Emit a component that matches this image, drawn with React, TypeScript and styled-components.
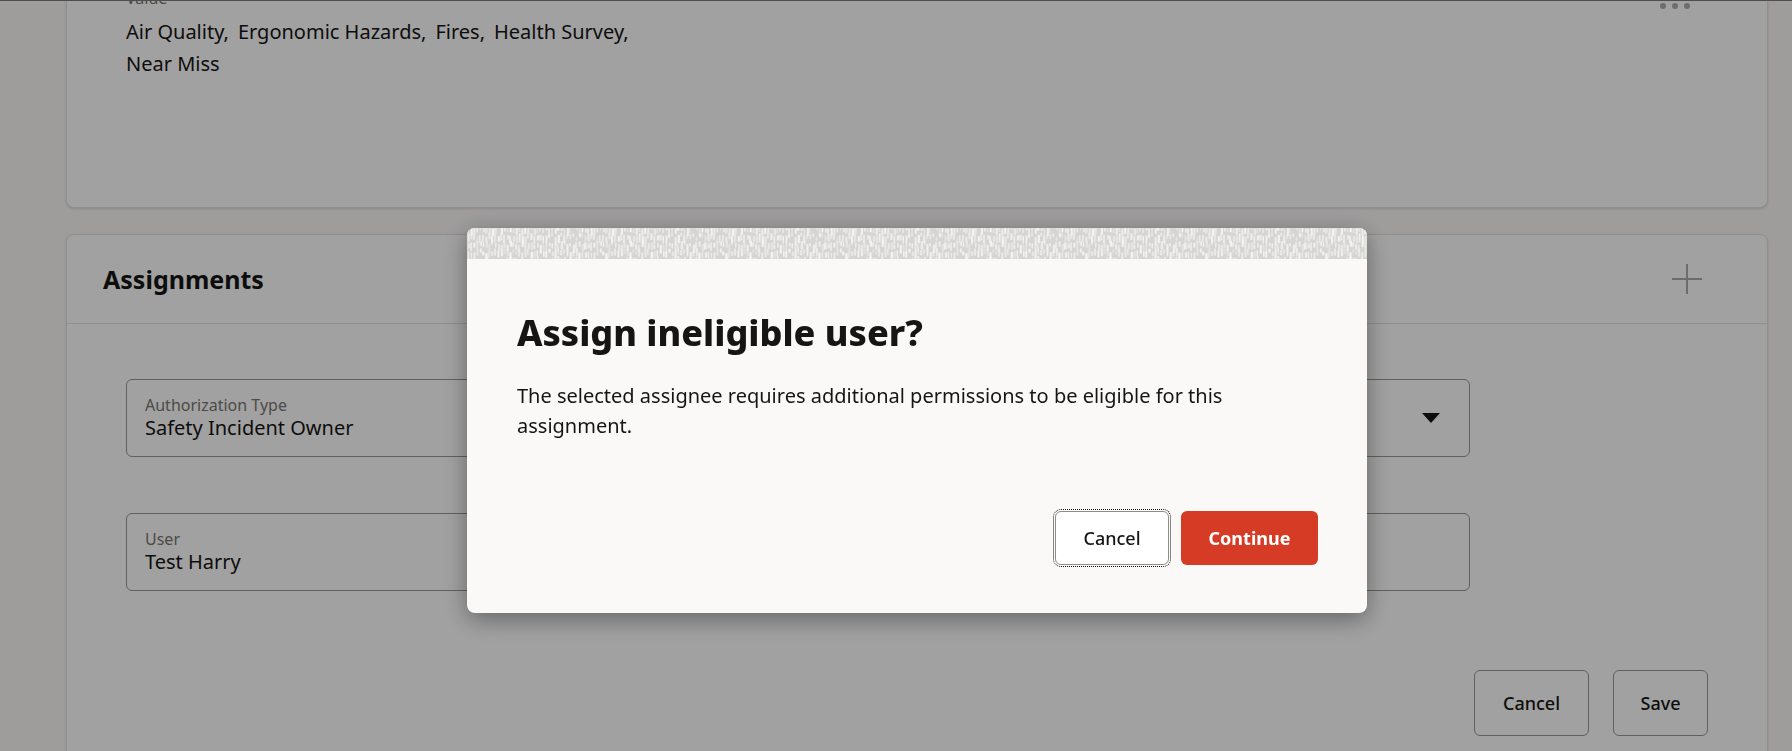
import { FC } from 'react';
import styled, { createGlobalStyle } from 'styled-components';

const GlobalStyle = createGlobalStyle`
    html, body {
        margin: 0;
        height: 100%;
        overflow: hidden;
        background: #fbf9f8;
    }
    body {
        font-family: "Noto Sans", "Open Sans", Arial, sans-serif;
        color: #161513;
    }
`;

// speckle strip on top of the dialog, seeded so it draws the same every time
const buildDashes = () => {
    const dashes: { x: number; y: number; w: number; h: number; o: number }[] = [];
    let seed = 7;
    const next = () => {
        seed = (seed * 16807) % 2147483647;
        return seed / 2147483647;
    };
    for (let x = 0; x < 120; x += 3) {
        for (let y = -4; y < 31; y += 8) {
            dashes.push({
                x: x + next(),
                y: y + next() * 5,
                w: 1.4 + next(),
                h: 4 + next() * 5,
                o: 0.45 + next() * 0.55,
            });
        }
    }
    return dashes;
};

const dashes = buildDashes();

const App: FC = () => {
    return (
        <>
            <GlobalStyle />
            <Page>
                <Card $cut>
                    <ValueBody>
                        <div>
                            <ValueLabel>Value</ValueLabel>
                            <ValueList>
                                <span>Air Quality,</span>
                                <span>Ergonomic Hazards,</span>
                                <span>Fires,</span>
                                <span>Health Survey,</span>
                                <span>Near Miss</span>
                            </ValueList>
                        </div>
                        <Dots width="30" height="6" viewBox="0 0 30 6">
                            <circle cx="3" cy="3" r="3" />
                            <circle cx="15" cy="3" r="3" />
                            <circle cx="27" cy="3" r="3" />
                        </Dots>
                    </ValueBody>
                </Card>
                <Card>
                    <CardHeader>
                        <CardTitle>Assignments</CardTitle>
                        <AddIcon width="30" height="30" viewBox="0 0 30 30">
                            <path d="M15 0v30M0 15h30" />
                        </AddIcon>
                    </CardHeader>
                    <Form>
                        <Field>
                            <div>
                                <FieldLabel>Authorization Type</FieldLabel>
                                <FieldValue>Safety Incident Owner</FieldValue>
                            </div>
                            <Caret width="18" height="10" viewBox="0 0 18 10">
                                <path d="M0 0h18L9 10z" />
                            </Caret>
                        </Field>
                        <Field>
                            <div>
                                <FieldLabel>User</FieldLabel>
                                <FieldValue>Test Harry</FieldValue>
                            </div>
                        </Field>
                    </Form>
                    <CardActions>
                        <PageButton $wide>Cancel</PageButton>
                        <PageButton>Save</PageButton>
                    </CardActions>
                </Card>
            </Page>
            <Scrim>
                <Dialog>
                    <Speckle width="100%" height="31">
                        <defs>
                            <pattern
                                id="speckle"
                                width="120"
                                height="31"
                                patternUnits="userSpaceOnUse"
                            >
                                {dashes.map((d, i) => (
                                    <rect
                                        key={i}
                                        x={d.x}
                                        y={d.y}
                                        width={d.w}
                                        height={d.h}
                                        rx="0.7"
                                        fill="#f4f3f1"
                                        opacity={d.o}
                                    />
                                ))}
                            </pattern>
                        </defs>
                        <rect width="100%" height="31" fill="url(#speckle)" />
                    </Speckle>
                    <DialogBody>
                        <DialogTitle>Assign ineligible user?</DialogTitle>
                        <DialogText>
                            The selected assignee requires additional permissions to be
                            eligible for this assignment.
                        </DialogText>
                    </DialogBody>
                    <DialogFooter>
                        <OutlineButton>Cancel</OutlineButton>
                        <PrimaryButton>Continue</PrimaryButton>
                    </DialogFooter>
                </Dialog>
            </Scrim>
        </>
    );
};

export default App;

const Page = styled.div`
    height: 751px;
    box-sizing: border-box;
    overflow: hidden;
    padding: 0 24px 0 66px;
    display: flex;
    flex-direction: column;
    gap: 26px;
`;
const Card = styled.section<{ $cut?: boolean }>`
    flex: none;
    background: #fff;
    border-radius: 8px;
    border: 1px solid #e4e2df;
    box-shadow: 0 1px 3px rgba(0, 0, 0, 0.12);
    ${({ $cut }) =>
        $cut &&
        `
        height: 208px;
        box-sizing: border-box;
        border-top: 0;
        border-radius: 0 0 8px 8px;
    `}
`;
const ValueBody = styled.div`
    display: flex;
    justify-content: space-between;
    align-items: flex-start;
    padding: 0 77px 0 59px;
    width: 700px;
    box-sizing: content-box;
    min-width: calc(100% - 136px);
`;
const ValueLabel = styled.div`
    font-size: 16px;
    line-height: 22px;
    margin-top: -13px;
    color: #7a7672;
`;
const ValueList = styled.div`
    display: flex;
    flex-wrap: wrap;
    column-gap: 9px;
    width: 590px;
    font-size: 20px;
    line-height: 32px;
    margin-top: 7px;
`;
const Dots = styled.svg`
    flex: none;
    margin-top: 3px;
    fill: #b0aeab;
`;
const CardHeader = styled.div`
    display: flex;
    align-items: center;
    justify-content: space-between;
    height: 89px;
    box-sizing: border-box;
    padding: 0 65px 0 36px;
    border-bottom: 1px solid #e4e2df;
`;
const CardTitle = styled.h2`
    margin: 0;
    font-size: 25px;
    font-weight: 700;
`;
const AddIcon = styled.svg`
    fill: none;
    stroke: #adaba9;
    stroke-width: 2;
`;
const Form = styled.div`
    display: flex;
    flex-direction: column;
    gap: 56px;
    padding: 55px 0 0 59px;
`;
const Field = styled.div`
    width: 1344px;
    height: 78px;
    box-sizing: border-box;
    border: 1px solid #9c9894;
    border-radius: 6px;
    padding: 15px 29px 0 18px;
    display: flex;
    justify-content: space-between;
`;
const FieldLabel = styled.div`
    font-size: 16px;
    line-height: 20px;
    color: #7a7672;
`;
const FieldValue = styled.div`
    font-size: 20px;
    line-height: 26px;
`;
const Caret = styled.svg`
    margin-top: 18px;
    fill: #161513;
`;
const CardActions = styled.div`
    display: flex;
    justify-content: flex-end;
    gap: 24px;
    padding: 79px 59px 60px 0;
`;
const PageButton = styled.button<{ $wide?: boolean }>`
    width: ${({ $wide }) => ($wide ? '115px' : '95px')};
    height: 66px;
    background: transparent;
    border: 1px solid #9c9894;
    border-radius: 6px;
    font: 500 18px "Noto Sans", sans-serif;
    color: #161513;
`;
const Scrim = styled.div`
    position: fixed;
    inset: 0;
    background: rgba(0, 0, 0, 0.37);
    border-top: 1px solid #4b504d;
    box-sizing: border-box;
    padding: 227px 0 0 467px;
`;
const Dialog = styled.div`
    width: 900px;
    height: 385px;
    display: flex;
    flex-direction: column;
    overflow: hidden;
    background: #fbf9f8;
    border-radius: 8px;
    box-shadow: 0 6px 24px rgba(0, 0, 0, 0.38);
`;
const Speckle = styled.svg`
    display: block;
    flex: none;
    background: #d6d5d3;
`;
const DialogBody = styled.div`
    flex: 1;
    padding: 50px 50px 0;
`;
const DialogTitle = styled.h1`
    margin: 0 0 24px;
    font-size: 36px;
    line-height: 48px;
    font-weight: 800;
    color: #161513;
`;
const DialogText = styled.p`
    margin: 0;
    width: 790px;
    font-size: 20px;
    line-height: 30px;
`;
const DialogFooter = styled.div`
    display: flex;
    justify-content: flex-end;
    align-items: center;
    gap: 12px;
    padding: 0 49px 48px 0;
`;
const OutlineButton = styled.button`
    width: 114px;
    height: 54px;
    background: #fff;
    border: 1px solid #8f8d8a;
    border-radius: 6px;
    outline: 1px dotted #161513;
    outline-offset: 1px;
    font: 500 18px "Noto Sans", sans-serif;
    color: #161513;
`;
const PrimaryButton = styled.button`
    width: 137px;
    height: 54px;
    background: #d63b25;
    border: 0;
    border-radius: 6px;
    font: 700 18px "Noto Sans", sans-serif;
    color: #fff;
`;
